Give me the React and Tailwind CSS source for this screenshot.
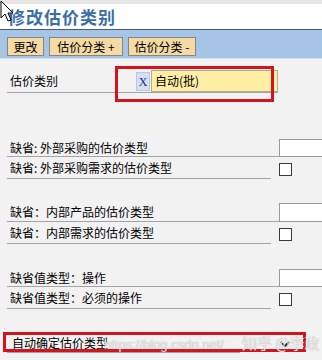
import React from "react";

const font = { fontFamily: '"Noto Sans CJK SC", "Noto Sans", sans-serif' };

function TextRow({ label, h = "h-[18px]" }) {
  return (
    <div className={`flex ${h}`}>
      <div className="w-[272px] border-b border-[#a3a3a3] flex items-center pl-[3px]">{label}</div>
      <div className="flex-1 bg-white border-t border-l border-b border-[#9a9a9a]" />
    </div>
  );
}

function CheckRow({ label }) {
  return (
    <div className="flex h-[22px]">
      <div className="w-[264px] border-b border-[#a3a3a3] flex items-center pl-[3px]">{label}</div>
      <div className="ml-[8px] mt-[6px] w-[13px] h-[13px] bg-white border border-[#3a3a3a]" />
    </div>
  );
}

export default function App() {
  return (
    <div className="relative w-[322px] h-[360px] overflow-hidden bg-[#f2f2f2] text-[12px] text-black" style={font}>
      {/* title */}
      <div className="h-[4px] bg-[#e6e6e6]" />
      <div className="h-[26px] bg-white border-b border-[#4b5c70] flex items-center pl-[8px]">
        <span className="text-[17px] font-bold tracking-[1px] text-[#3c6ea6]">修改估价类别</span>
      </div>
      {/* toolbar */}
      <div className="h-[28px] bg-[#a6c4e6] flex items-start pt-[7px] pl-[7px] gap-[5px]">
        <button className="w-[37px] h-[19px] bg-[#f6daa3] border border-[#858585] text-[12px] leading-[17px]">更改</button>
        <button className="w-[74px] h-[19px] bg-[#f6daa3] border border-[#858585] text-[12px] leading-[17px]">估价分类 +</button>
        <button className="w-[68px] h-[19px] bg-[#f6daa3] border border-[#858585] text-[12px] leading-[17px]">估价分类 -</button>
      </div>
      <div className="border-t border-[#d0deee]" />

      <div className="pl-[7px]">
        {/* 估价类别 */}
        <div className="relative mt-[11px] w-[271px] h-[23px] flex border-b border-[#a3a3a3]">
          <div className="w-[129px] flex items-center pl-[3px]">估价类别</div>
          <div className="mt-[2px] w-[14px] h-[19px] bg-[#d4dff3] border border-[#b9c8e2] flex items-center justify-center text-[12px] text-[#1c2c8c]" style={{ fontFamily: '"Liberation Serif", serif' }}>X</div>
          <div className="ml-[1px] flex-1 h-[22px] bg-[#ffefa4] border border-[#b3ab92] flex items-center pl-[3px]">自动(批)</div>
          <div className="absolute left-[108px] top-[-4px] w-[159px] h-[36px] border-[3px] border-[#d3141d]" />
        </div>

        <div className="mt-[46px]">
          <TextRow label="缺省: 外部采购的估价类型" />
          <CheckRow label="缺省: 外部采购需求的估价类型" />
        </div>
        <div className="mt-[24px]">
          <TextRow label="缺省：内部产品的估价类型" h="h-[19px]" />
          <CheckRow label="缺省：内部需求的估价类型" />
        </div>
        <div className="mt-[25px]">
          <TextRow label="缺省值类型：操作" />
          <CheckRow label="缺省值类型：必须的操作" />
        </div>

        {/* 自动确定估价类型 */}
        <div className="relative mt-[24px] flex h-[20px]">
          <div className="w-[233px] border-b border-[#a3a3a3] flex items-center pl-[5px]">自动确定估价类型</div>
          <div className="ml-[38px] mt-[3px] w-[14px] h-[15px] flex items-center justify-center">
            <svg width="10" height="8" viewBox="0 0 10 8">
              <path d="M1 2 L5 6 L9 2" fill="none" stroke="#222" strokeWidth="2" />
            </svg>
          </div>
          <div className="absolute left-[-4px] top-[-1px] w-[303px] h-[20px] border-[3px] border-[#d3141d]" />
        </div>
      </div>

      {/* watermark */}
      <div className="absolute left-[104px] top-[335px] text-[13px] text-white/70 whitespace-nowrap" style={{ fontFamily: '"Liberation Sans", sans-serif', textShadow: "0 0 1px #9a9a9a" }}>
        https://blog.csdn.net/
      </div>
      <div className="absolute left-[242px] top-[332px] text-[15px] text-white/80 whitespace-nowrap" style={{ ...font, textShadow: "0 0 1px #8a8a8a" }}>
        知乎 @李政
      </div>

      {/* cursor */}
      <svg className="absolute left-0 top-0" width="16" height="24" viewBox="0 0 16 24">
        <path d="M1 1 L1 18 L5 14 L8 21 L11 20 L8 13 L13 13 Z" fill="white" stroke="black" strokeWidth="1" />
      </svg>
    </div>
  );
}
